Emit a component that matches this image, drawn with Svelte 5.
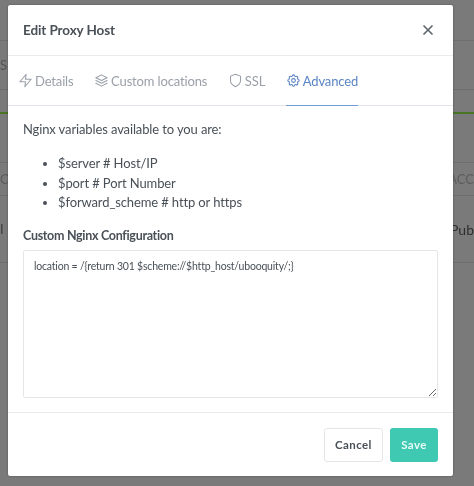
<script lang="ts">
	const tabs = [
		{ label: 'Details', icon: 'bolt' },
		{ label: 'Custom locations', icon: 'layers' },
		{ label: 'SSL', icon: 'shield' },
		{ label: 'Advanced', icon: 'gear', active: true }
	];

	const variables = ['$server # Host/IP', '$port # Port Number', '$forward_scheme # http or https'];

	let config = $state('location = /{return 301 $scheme://$http_host/ubooquity/;}');
</script>

<div class="backdrop">
	<div class="bg-row top"><span>SI</span></div>
	<div class="bg-bar"></div>
	<div class="bg-row head"><span>C</span><span>ACC</span></div>
	<div class="bg-row body"><span>I</span><span class="dark">Pub</span></div>
</div>

<div class="modal">
	<header>
		<h2>Edit Proxy Host</h2>
		<button class="close" aria-label="Close">
			<svg viewBox="0 0 16 16" width="16" height="16"><path d="M3.500 3.500l9 9M12.500 3.500l-9 9" /></svg>
		</button>
	</header>

	<nav>
		{#each tabs as tab}
			<div class="tab" class:active={tab.active}>
				<svg viewBox="0 0 24 24" width="15" height="15">
					{#if tab.icon === 'bolt'}
						<path d="M13 2L3 14h9l-1 8 10-12h-9z" />
					{:else if tab.icon === 'layers'}
						<path d="M12 3L3 7.500l9 4.500 9-4.500z" />
						<path d="M3 12l9 4.500 9-4.500" />
						<path d="M3 16.500l9 4.500 9-4.500" />
					{:else if tab.icon === 'shield'}
						<path d="M12 22s8-4 8-10V5l-8-3-8 3v7c0 6 8 10 8 10z" />
					{:else}
						<path d="M10.300 4.300c.4-1.800 3-1.800 3.400 0a1.700 1.700 0 0 0 2.600 1.100c1.500-.9 3.300.8 2.400 2.400a1.700 1.700 0 0 0 1 2.500c1.800.4 1.800 3 0 3.400a1.700 1.700 0 0 0-1 2.600c.9 1.500-.9 3.300-2.400 2.400a1.700 1.700 0 0 0-2.600 1c-.4 1.800-3 1.800-3.400 0a1.700 1.700 0 0 0-2.600-1c-1.500.9-3.300-.9-2.400-2.400a1.700 1.700 0 0 0-1-2.600c-1.800-.4-1.800-3 0-3.400a1.700 1.700 0 0 0 1-2.500c-.9-1.600.9-3.300 2.400-2.400 1 .6 2.300.1 2.600-1.100" />
						<circle cx="12" cy="12" r="3" />
					{/if}
				</svg>
				<span>{tab.label}</span>
			</div>
		{/each}
	</nav>

	<section>
		<p>Nginx variables available to you are:</p>
		<ul>
			{#each variables as item}
				<li>{item}</li>
			{/each}
		</ul>
		<label for="config">Custom Nginx Configuration</label>
		<textarea id="config" bind:value={config}></textarea>
	</section>

	<footer>
		<button class="btn cancel">Cancel</button>
		<button class="btn save">Save</button>
	</footer>
</div>

<style>
	:global(body) {
		margin: 0;
		background: #7a7a7a;
		font-family: 'Lato', 'Open Sans', sans-serif;
		overflow: hidden;
	}

	.backdrop {
		position: fixed;
		inset: 0;
		padding-top: 40px;
		color: #555;
		font-size: 13px;
	}

	.bg-row {
		box-sizing: border-box;
		display: flex;
		justify-content: space-between;
		align-items: center;
		border: 1px solid #6e6e6e;
		border-width: 1px 0;
	}

	.bg-row.top {
		height: 50px;
	}

	.bg-bar {
		height: 2px;
		margin-top: 22px;
		background: #4a7526;
	}

	.bg-row.head {
		height: 34px;
		margin-top: 48px;
		color: #5c5c5c;
	}

	.bg-row.body {
		height: 67px;
		border-top: 0;
		color: #3c3c3c;
	}

	.bg-row .dark {
		color: #2e2e2e;
		font-size: 14px;
	}

	.modal {
		position: absolute;
		left: 8px;
		top: 5px;
		width: 445px;
		height: 471px;
		box-sizing: border-box;
		display: flex;
		flex-direction: column;
		background: #fff;
		border-radius: 2px;
		box-shadow: 0 0 2px rgba(0, 0, 0, 0.4);
		color: #495057;
	}

	header {
		height: 51px;
		box-sizing: border-box;
		display: flex;
		align-items: center;
		justify-content: space-between;
		padding: 0 17px 0 15px;
		border-bottom: 1px solid #e9ecef;
	}

	h2 {
		margin: 0;
		font-size: 13.500px;
		font-weight: 700;
		letter-spacing: -0.100px;
	}

	.close {
		display: flex;
		padding: 0;
		border: 0;
		background: none;
	}

	.close path {
		fill: none;
		stroke: #5d646b;
		stroke-width: 1.600;
	}

	nav {
		height: 50px;
		flex-shrink: 0;
		box-sizing: border-box;
		display: flex;
		padding-left: 10px;
		gap: 20.600px;
		border-bottom: 1px solid #e1e5ea;
	}

	.tab {
		display: flex;
		align-items: center;
		gap: 2px;
		height: 50px;
		box-sizing: border-box;
		font-size: 13px;
		letter-spacing: -0.150px;
		color: #9aa0a8;
		border-bottom: 1px solid transparent;
	}

	.tab svg {
		fill: none;
		stroke: currentColor;
		stroke-width: 1.700;
		stroke-linecap: round;
		stroke-linejoin: round;
	}

	.tab.active {
		color: #5b85c4;
		border-bottom-color: #6f9bd4;
	}

	section {
		flex: 1;
		padding: 13px 15px 0;
		font-size: 13px;
		letter-spacing: -0.120px;
	}

	p {
		margin: 0;
		line-height: 21px;
	}

	ul {
		margin: 14px 0 0;
		padding: 0 0 0 35px;
		line-height: 19.500px;
	}

	label {
		display: block;
		margin-top: 12px;
		font-size: 12.500px;
		font-weight: 700;
		letter-spacing: -0.300px;
		line-height: 21px;
	}

	textarea {
		display: block;
		box-sizing: border-box;
		width: 415px;
		height: 148px;
		margin-top: 4.500px;
		padding: 6px 10px;
		border: 1px solid #e4e7ea;
		border-radius: 2px;
		font: 10.500px/18px 'Lato', sans-serif;
		letter-spacing: -0.200px;
		color: #495057;
		outline: none;
	}

	footer {
		height: 64px;
		box-sizing: border-box;
		display: flex;
		align-items: center;
		justify-content: flex-end;
		gap: 7px;
		padding: 0 15px;
		border-top: 1px solid #e9ecef;
	}

	.btn {
		height: 34px;
		box-sizing: border-box;
		border-radius: 3px;
		font: 700 11.500px 'Lato', sans-serif;
		letter-spacing: 0.400px;
	}

	.cancel {
		width: 59px;
		background: #fff;
		border: 1px solid #e4e7ea;
		color: #495057;
	}

	.save {
		width: 48px;
		background: #3fc9b2;
		border: 0;
		color: #e8fbf7;
	}
</style>
